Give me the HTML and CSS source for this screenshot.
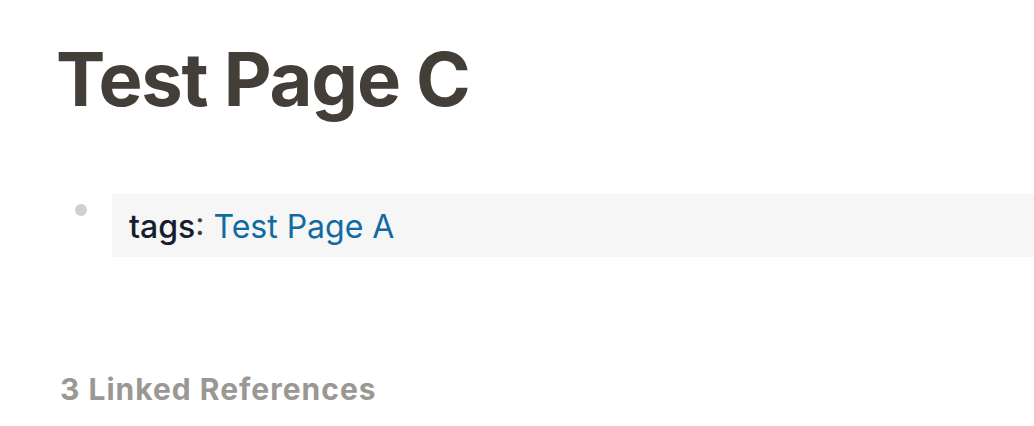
FILE: index.html
```html
<!DOCTYPE html>
<html lang="en">
<head>
  <meta charset="UTF-8">
  <title>Test Page C</title>
  <link rel="stylesheet" href="styles.css">
</head>
<body>
  <div class="page">
    <h1 class="page-title">Test Page C</h1>
    <!-- properties block -->
    <div class="block">
      <span class="bullet-wrap"><span class="bullet"></span></span>
      <div class="block-content"><span class="prop-key">tags</span><span class="prop-sep">: </span><a class="page-ref" href="#">Test Page A</a></div>
    </div>
    <div class="references">
      <h2 class="references-title">3 Linked References</h2>
    </div>
  </div>
</body>
</html>
```

FILE: styles.css
```css
html, body {
  margin: 0;
  background: #fff;
}
body {
  font-family: Inter, "Noto Sans", sans-serif;
  color: #433f38;
}
.page {
  display: flex;
  flex-direction: column;
  padding: 34px 0 0 56px;
}
.page-title {
  margin: 0;
  font-size: 74px;
  line-height: 90px;
  font-weight: 700;
  color: #433f38;
  letter-spacing: -1.2px;
}
.block {
  display: flex;
  align-items: flex-start;
  margin-top: 70px;
}
.bullet-wrap {
  width: 50px;
  height: 32px;
  margin-right: 6px;
  display: flex;
  justify-content: center;
  align-items: center;
}
.bullet {
  width: 12px;
  height: 12px;
  border-radius: 50%;
  background: #ced0d1;
}
.block-content {
  flex: 1;
  background: #f6f6f6;
  padding: 9px 17px 7px;
  font-size: 32px;
  line-height: 47px;
  white-space: nowrap;
}
.prop-key {
  color: #161e2e;
  font-weight: 500;
}
.prop-sep {
  color: #433f38;
}
.page-ref {
  color: #106ba3;
  text-decoration: none;
}
.references {
  margin-top: 112px;
}
.references-title {
  margin: 0 0 0 4px;
  font-size: 30px;
  line-height: 40px;
  font-weight: 700;
  letter-spacing: 1px;
  color: #9b9893;
}
```
